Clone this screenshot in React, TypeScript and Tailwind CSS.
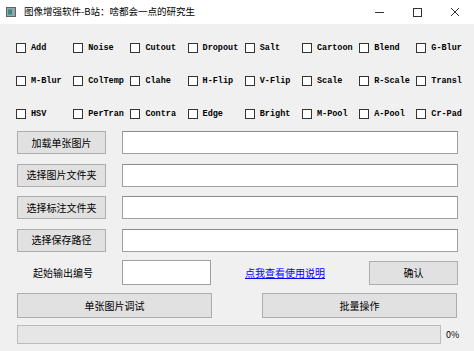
import React from "react";

const rows: string[][] = [
  ["Add", "Noise", "Cutout", "Dropout", "Salt", "Cartoon", "Blend", "G-Blur"],
  ["M-Blur", "ColTemp", "Clahe", "H-Flip", "V-Flip", "Scale", "R-Scale", "Transl"],
  ["HSV", "PerTran", "Contra", "Edge", "Bright", "M-Pool", "A-Pool", "Cr-Pad"],
];

const cjk = { fontFamily: '"Noto Sans CJK SC", "Noto Sans", sans-serif' };
const mono = { fontFamily: '"Liberation Mono", "DejaVu Sans Mono", monospace' };

function Btn({ label, className }: { label: string; className: string }) {
  return (
    <div
      className={
        "flex items-center justify-center bg-[#e1e1e1] border border-[#adadad] text-[10px] text-black leading-none " +
        className
      }
      style={cjk}
    >
      {label}
    </div>
  );
}

export default function App() {
  return (
    <div className="w-[474px] h-[351px] bg-[#f0f0f0] overflow-hidden relative">
      {/* Title bar */}
      <div className="h-[24px] bg-white flex items-center">
        <svg width="10" height="10" viewBox="0 0 10 10" className="ml-[6px]">
          <rect x="0.5" y="0.5" width="9" height="9" fill="#9aa3a8" stroke="#5b6468" />
          <rect x="2" y="2.5" width="4" height="5" fill="#2f8f86" />
        </svg>
        <span className="ml-[8px] text-[9.5px] text-black leading-none" style={cjk}>
          图像增强软件-B站：啥都会一点的研究生
        </span>
        <div className="ml-auto flex items-center h-full">
          <div className="w-[38px] h-full flex items-center justify-center">
            <div className="w-[9px] h-px bg-[#333]" />
          </div>
          <div className="w-[38px] h-full flex items-center justify-center">
            <div className="w-[9px] h-[9px] border border-[#333]" />
          </div>
          <div className="w-[38px] h-full flex items-center justify-center">
            <svg width="10" height="10" viewBox="0 0 10 10">
              <path d="M1 1 L9 9 M9 1 L1 9" stroke="#333" strokeWidth="1" />
            </svg>
          </div>
        </div>
      </div>

      {/* Checkboxes */}
      <div className="pt-[7.5px] pl-[16px]">
        {rows.map((r, i) => (
          <div key={i} className="grid grid-cols-[repeat(8,57.2px)] h-[33px] items-center">
            {r.map((t) => (
              <div key={t} className="flex items-center">
                <div className="w-[10px] h-[10px] bg-white border border-[#333] shrink-0" />
                <span className="ml-[5px] text-[8.5px] leading-none text-black font-bold whitespace-nowrap" style={mono}>
                  {t}
                </span>
              </div>
            ))}
          </div>
        ))}
      </div>

      {/* Path rows */}
      <div className="mt-[0.5px] pl-[17px] pr-[16px] flex flex-col gap-[9.5px]">
        {["加载单张图片", "选择图片文件夹", "选择标注文件夹", "选择保存路径"].map((l) => (
          <div key={l} className="flex items-center h-[23px]">
            <Btn label={l} className="w-[89px] h-[23px]" />
            <div className="ml-[16px] w-[336px] h-[23px] bg-white border border-[#a0a0a0] border-t-[#8a8a8a]" />
          </div>
        ))}
      </div>

      {/* Start number row */}
      <div className="mt-[8.5px] flex items-center h-[25px]">
        <div className="w-[122px] flex justify-center pl-[4px] text-[10px] text-black leading-none" style={cjk}>
          起始输出编号
        </div>
        <div className="w-[89px] h-[25px] bg-white border border-[#a0a0a0]" />
        <a
          className="ml-[34px] text-[10px] text-[#0000ff] underline leading-none cursor-pointer"
          style={cjk}
        >
          点我查看使用说明
        </a>
        <Btn label="确认" className="ml-[44px] w-[89px] h-[24px]" />
      </div>

      {/* Action buttons */}
      <div className="mt-[8px] flex items-center pl-[17px]">
        <Btn label="单张图片调试" className="w-[195px] h-[25px]" />
        <Btn label="批量操作" className="ml-[50px] w-[195px] h-[25px]" />
      </div>

      {/* Progress */}
      <div className="mt-[7px] flex items-center pl-[17px]">
        <div className="w-[424px] h-[19px] bg-[#e6e6e6] border border-[#bcbcbc]" />
        <span className="ml-[5px] text-[9px] text-black leading-none" style={cjk}>
          0%
        </span>
      </div>
    </div>
  );
}
